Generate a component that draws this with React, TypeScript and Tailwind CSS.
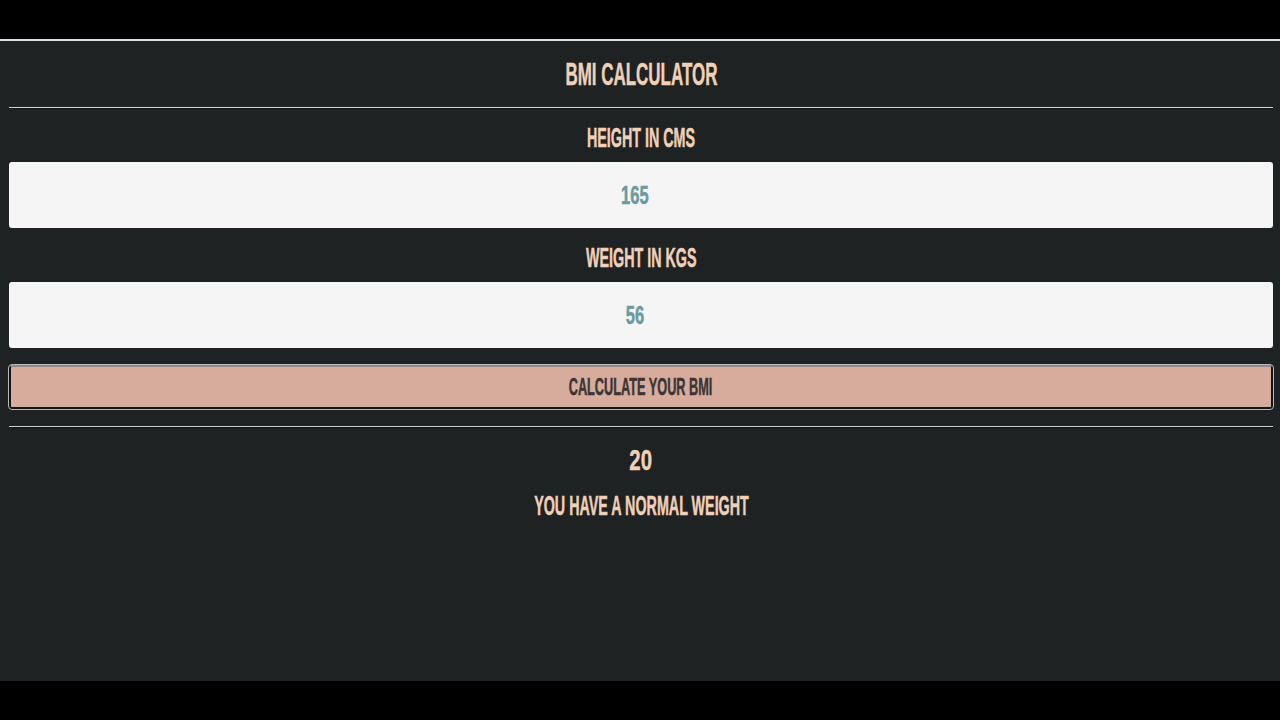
import React from 'react';

const FONT = { fontFamily: '"Liberation Sans", Arial, sans-serif' };

// Liberation Sans squeezed to the narrow display face of the design
const Squeeze = ({ children, className }: { children: React.ReactNode; className: string }) => (
  <span
    className={`inline-block font-bold uppercase leading-none [-webkit-text-stroke:0.5px_currentColor] ${className}`}
  >
    {children}
  </span>
);

export default function App() {
  return (
    <div className="flex h-screen flex-col bg-black" style={FONT}>
      <div className="h-[39px] shrink-0" />

      <main className="flex h-[642px] shrink-0 flex-col border-t-2 border-[#dedede] bg-[#1e2222] pl-[9px] pr-[7px]">
        {/* Title */}
        <div className="flex h-[66px] items-center justify-center">
          <Squeeze className="scale-x-[0.53] text-[32px] text-[#efd0b8]">BMI Calculator</Squeeze>
        </div>
        <div className="h-[2px] border-t border-[#d6d6d6] border-b border-b-[#111]" />

        {/* Height */}
        <div className="flex h-[53px] items-center justify-center pt-[5px]">
          <Squeeze className="scale-x-[0.53] text-[27px] text-[#efd0b8]">Height in cms</Squeeze>
        </div>
        <div className="flex h-[66px] items-center justify-center rounded-[3px] bg-[#f5f5f5] pr-[12px]">
          <Squeeze className="scale-x-[0.66] text-[25px] text-[#6b9aa0]">165</Squeeze>
        </div>

        {/* Weight */}
        <div className="flex h-[54px] items-center justify-center pt-[6px]">
          <Squeeze className="scale-x-[0.53] text-[27px] text-[#efd0b8]">Weight in kgs</Squeeze>
        </div>
        <div className="flex h-[66px] items-center justify-center rounded-[3px] bg-[#f5f5f5] pr-[12px]">
          <Squeeze className="scale-x-[0.66] text-[25px] text-[#6b9aa0]">56</Squeeze>
        </div>

        {/* Button */}
        <button className="mt-[17px] flex h-[44px] items-center justify-center rounded-[3px] border-2 border-[#151515] border-t-[#8c8c8c] bg-[#d7ac9c] outline outline-1 outline-[#b8b8b8]">
          <Squeeze className="scale-x-[0.53] text-[24px] text-[#3b3535]">Calculate your BMI</Squeeze>
        </button>

        <div className="mt-[17px] h-[2px] border-t border-[#cfcfcf] border-b border-b-[#111]" />

        {/* Result */}
        <div className="flex h-[62px] items-center justify-center pt-[2px]">
          <Squeeze className="scale-x-[0.68] text-[30px] text-[#efd0b8]">20</Squeeze>
        </div>
        <div className="flex h-[32px] items-center justify-center">
          <Squeeze className="scale-x-[0.53] text-[27px] text-[#efd0b8]">You have a normal weight</Squeeze>
        </div>
      </main>

      <div className="flex-1" />
    </div>
  );
}
